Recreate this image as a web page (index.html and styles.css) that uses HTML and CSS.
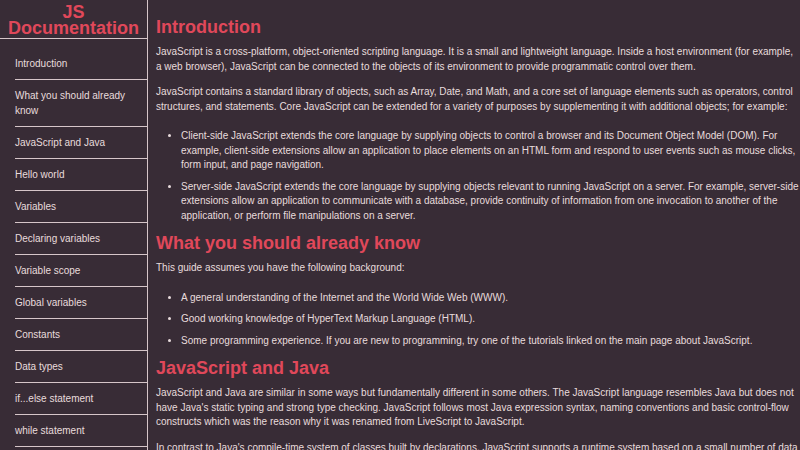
FILE: index.html
```html
<!DOCTYPE html>
<html lang="en">
<head>
    <meta charset="UTF-8">
    <meta name="viewport" content="width=device-width, initial-scale=1.0">
    <title>JS Documentation</title>
    <link rel="stylesheet" href="styles.css">
</head>
<body>
    <nav id="navbar">
        <header class="nav-title">JS Documentation</header>
        <ul class="nav-list">
            <li><a class="nav-link" href="#Introduction">Introduction</a></li>
            <li><a class="nav-link" href="#What_you_should_already_know">What you should already know</a></li>
            <li><a class="nav-link" href="#JavaScript_and_Java">JavaScript and Java</a></li>
            <li><a class="nav-link" href="#Hello_world">Hello world</a></li>
            <li><a class="nav-link" href="#Variables">Variables</a></li>
            <li><a class="nav-link" href="#Declaring_variables">Declaring variables</a></li>
            <li><a class="nav-link" href="#Variable_scope">Variable scope</a></li>
            <li><a class="nav-link" href="#Global_variables">Global variables</a></li>
            <li><a class="nav-link" href="#Constants">Constants</a></li>
            <li><a class="nav-link" href="#Data_types">Data types</a></li>
            <li><a class="nav-link" href="#if...else_statement">if...else statement</a></li>
            <li><a class="nav-link" href="#while_statement">while statement</a></li>
            <li><a class="nav-link" href="#Function_declarations">Function declarations</a></li>
            <li><a class="nav-link" href="#Reference">Reference</a></li>
        </ul>
    </nav>

    <main id="main-doc">
        <section class="main-section" id="Introduction">
            <header>Introduction</header>
            <p>JavaScript is a cross-platform, object-oriented scripting language. It is a small and lightweight language. Inside a host environment (for example, a web browser), JavaScript can be connected to the objects of its environment to provide programmatic control over them.</p>
            <p>JavaScript contains a standard library of objects, such as Array, Date, and Math, and a core set of language elements such as operators, control structures, and statements. Core JavaScript can be extended for a variety of purposes by supplementing it with additional objects; for example:</p>
            <ul>
                <li>Client-side JavaScript extends the core language by supplying objects to control a browser and its Document Object Model (DOM). For example, client-side extensions allow an application to place elements on an HTML form and respond to user events such as mouse clicks, form input, and page navigation.</li>
                <li>Server-side JavaScript extends the core language by supplying objects relevant to running JavaScript on a server. For example, server-side extensions allow an application to communicate with a database, provide continuity of information from one invocation to another of the application, or perform file manipulations on a server.</li>
            </ul>
        </section>

        <section class="main-section" id="What_you_should_already_know">
            <header>What you should already know</header>
            <p>This guide assumes you have the following background:</p>
            <ul>
                <li>A general understanding of the Internet and the World Wide Web (WWW).</li>
                <li>Good working knowledge of HyperText Markup Language (HTML).</li>
                <li>Some programming experience. If you are new to programming, try one of the tutorials linked on the main page about JavaScript.</li>
            </ul>
        </section>

        <section class="main-section" id="JavaScript_and_Java">
            <header>JavaScript and Java</header>
            <p>JavaScript and Java are similar in some ways but fundamentally different in some others. The JavaScript language resembles Java but does not have Java's static typing and strong type checking. JavaScript follows most Java expression syntax, naming conventions and basic control-flow constructs which was the reason why it was renamed from LiveScript to JavaScript.</p>
            <p>In contrast to Java's compile-time system of classes built by declarations, JavaScript supports a runtime system based on a small number of data types representing numeric, Boolean, and string values. JavaScript has a prototype-based object model instead of the more common class-based object model.</p>
        </section>
    </main>
</body>
</html>
```

FILE: styles.css
```css
html, body {
    margin: 0;
    height: 100%;
}
body {
    display: flex;
    overflow: hidden;
    background-color: #382c36;
    color: #e8dcdd;
    font-family: "Liberation Sans", Arial, sans-serif;
    font-size: 10px;
}
#navbar {
    flex: 0 0 147px;
    height: 100vh;
    overflow: hidden;
    border-right: 1px solid #d6c6c9;
}
.nav-title {
    padding: 4px 0 2px;
    border-bottom: 1px solid #d6c6c9;
    color: #e0485a;
    font-size: 18px;
    font-weight: bold;
    line-height: 16px;
    text-align: center;
}
.nav-list {
    list-style: none;
    margin: 9px 0 0 15px;
    padding: 0;
}
.nav-link {
    display: block;
    padding: 8px 0;
    border-bottom: 1px solid #d6c6c9;
    color: #e8dcdd;
    line-height: 15px;
    text-decoration: none;
}
#main-doc {
    flex: 1;
    min-width: 0;
    padding: 7px 0 0 8px;
    line-height: 1.45;
}
.main-section header {
    margin: 10px 0 7px;
    color: #e0485a;
    font-size: 18px;
    font-weight: bold;
    line-height: normal;
}
.main-section p {
    margin: 0 0 11px;
}
.main-section ul {
    margin: 15px 0 0;
    padding-left: 25px;
}
.main-section li {
    margin-bottom: 7px;
}
```
